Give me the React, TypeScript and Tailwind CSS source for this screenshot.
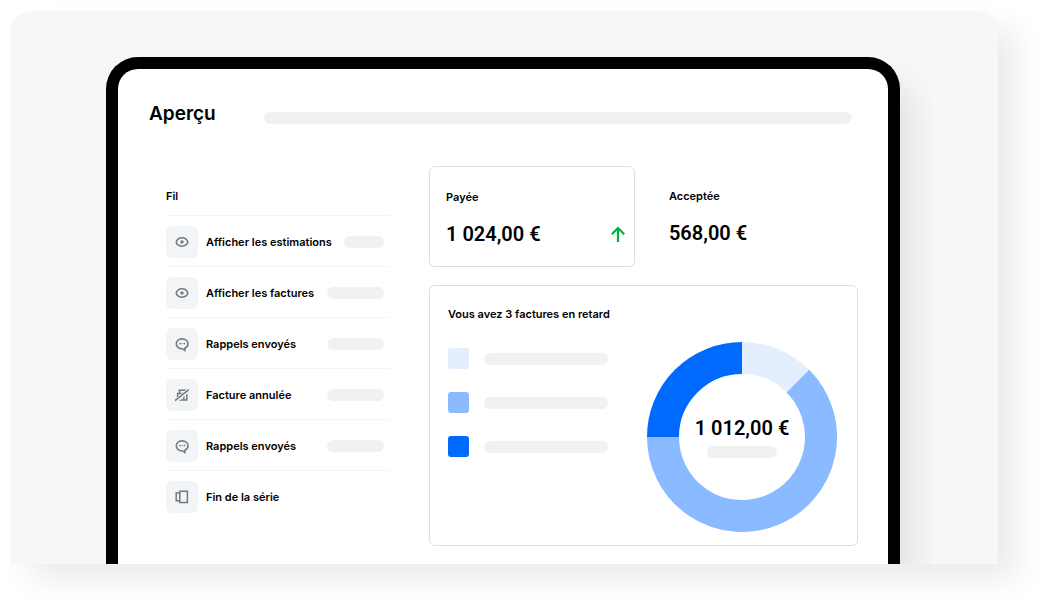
import React from 'react';

function EyeIcon() {
  return (
    <svg className="w-4 h-4" viewBox="0 0 16 16" fill="none" stroke="currentColor" strokeWidth="1.6">
      <ellipse cx="8" cy="8" rx="5.7" ry="4.2" />
      <circle cx="8" cy="8" r="1.7" fill="currentColor" stroke="none" />
    </svg>
  );
}

function ChatIcon() {
  return (
    <svg className="w-4 h-4" viewBox="0 0 16 16" fill="none" stroke="currentColor" strokeWidth="1.6">
      <path d="M10.8 12.2V14.4L8.2 12.7C4.6 12.7 2.3 10.6 2.3 7.8C2.3 4.9 4.7 2.9 8.1 2.9S14 4.9 14 7.8C14 9.8 12.7 11.4 10.8 12.2Z" />
      <g fill="currentColor" stroke="none">
        <circle cx="6" cy="7.6" r="0.9" />
        <circle cx="8.2" cy="7.6" r="0.7" />
        <circle cx="10.4" cy="7.6" r="0.9" />
      </g>
    </svg>
  );
}

function CanceledIcon() {
  return (
    <svg className="w-4 h-4" viewBox="0 0 16 16" fill="none" stroke="currentColor" strokeWidth="1.5">
      <path d="M4.4 3.2H12.4M5.6 3.2V6.2M3 6.6H9M3.6 6.6V11M5 12.9H12.8V6M9.8 8.4V12.9" />
      <path d="M1.4 14.2L15 2.8" stroke="#f2f4f6" strokeWidth="3.8" />
      <path d="M1 13.6L14.8 2.6" />
    </svg>
  );
}

function SeriesIcon() {
  return (
    <svg className="w-4 h-4" viewBox="0 0 16 16" fill="none" stroke="currentColor" strokeWidth="1.5">
      <path d="M5.8 2.2H13.4V13.6H5.8Z" />
      <path d="M5.8 4H2.2V11.8H5.8" />
    </svg>
  );
}

const feed = [
  { id: 1, label: 'Afficher les estimations', icon: EyeIcon, bar: 'w-10' },
  { id: 2, label: 'Afficher les factures', icon: EyeIcon, bar: 'w-[57px]' },
  { id: 3, label: 'Rappels envoyés', icon: ChatIcon, bar: 'w-[57px]' },
  { id: 4, label: 'Facture annulée', icon: CanceledIcon, bar: 'w-[57px]' },
  { id: 5, label: 'Rappels envoyés', icon: ChatIcon, bar: 'w-[57px]' },
  { id: 6, label: 'Fin de la série', icon: SeriesIcon, bar: '' },
];

const legend = ['bg-[#e3efff]', 'bg-[#8abaff]', 'bg-[#006aff]'];

function Donut() {
  return (
    <div className="grid place-items-center shrink-0">
      <svg className="[grid-area:1/1] w-[190px] h-[190px]" viewBox="0 0 190 190" fill="none" strokeWidth="32">
        <path d="M95 16A79 79 0 0 1 150.86 39.14" stroke="#e3efff" />
        <path d="M150.86 39.14A79 79 0 1 1 16 95" stroke="#8abaff" />
        <path d="M16 95A79 79 0 0 1 95 16" stroke="#006aff" />
      </svg>
      <div className="[grid-area:1/1] flex flex-col items-center gap-1.5">
        <span className="font-['Roboto',sans-serif] text-[20px] leading-6 font-semibold whitespace-nowrap">1 012,00 €</span>
        <div className="w-[70px] h-3 rounded-full bg-[#f1f1f1]"></div>
      </div>
    </div>
  );
}

export default function OverviewPreview() {
  return (
    <div className="pl-2.5 pr-[50px] pt-[11px] pb-[50px] bg-white text-black font-['Inter',sans-serif]">
      <div className="bg-[#f7f7f7] rounded-t-[20px] pt-[46px] pl-24 pr-[66px] shadow-[20px_16px_30px_rgba(0,0,0,0.08)]">
        {/* Clips the device shadow on the right */}
        <div className="overflow-hidden pr-8">
          <div className="border-12 border-b-0 border-black rounded-t-[32px] bg-white shadow-[16px_24px_32px_rgba(0,0,0,0.08)]">
            <header className="flex items-end pt-[35px] pl-[31px] pr-9">
              <h1 className="w-[115px] shrink-0 text-[19px] leading-5 font-semibold">Aperçu</h1>
              <div className="flex-1 h-3 rounded-full bg-[#f1f1f1]"></div>
            </header>

            <div className="flex gap-[39px] pt-[42px] pl-12 pr-[30px] pb-[18px]">
              {/* Feed */}
              <section className="w-56 shrink-0">
                <h2 className="pt-[22px] pb-[11px] text-[11px] leading-4 font-semibold">Fil</h2>
                <ul>
                  {feed.map(({ id, label, icon: Icon, bar }) => (
                    <li key={id} className="flex items-center h-[51px] border-t border-[#f5f5f5] pt-0.5 pr-1.5">
                      <div className="w-8 h-8 shrink-0 rounded-md bg-[#f2f4f6] text-[#6e7c87] flex items-center justify-center">
                        <Icon />
                      </div>
                      <span className="ml-2 text-[11px] leading-4 font-semibold whitespace-nowrap">{label}</span>
                      {bar && <div className={`ml-auto shrink-0 h-3 rounded-full bg-[#f1f1f1] ${bar}`}></div>}
                    </li>
                  ))}
                </ul>
              </section>

              {/* Totals */}
              <section className="flex-1 min-w-0">
                <div className="flex">
                  <div className="w-[48%] border border-[#dddddd] rounded-md pt-[22px] pb-[18px] pl-4 pr-2">
                    <h3 className="text-[11px] leading-4 font-semibold">Payée</h3>
                    <div className="mt-[15px] flex items-center justify-between">
                      <span className="font-['Roboto',sans-serif] text-[20px] leading-7 font-semibold whitespace-nowrap">1 024,00 €</span>
                      <svg className="w-4 h-4" viewBox="0 0 16 16" fill="none" stroke="#00b23b" strokeWidth="2.2">
                        <path d="M8 16V2M1.8 8.2L8 2L14.2 8.2" />
                      </svg>
                    </div>
                  </div>
                  <div className="pt-[22px] pl-[34px]">
                    <h3 className="text-[11px] leading-4 font-semibold">Acceptée</h3>
                    <p className="mt-[15px] font-['Roboto',sans-serif] text-[20px] leading-7 font-semibold whitespace-nowrap">568,00 €</p>
                  </div>
                </div>

                <div className="mt-[18px] border border-[#dddddd] rounded-md pt-5 pb-[13px] pl-[18px] pr-5">
                  <h3 className="text-[11px] leading-4 font-semibold">Vous avez 3 factures en retard</h3>
                  <div className="mt-5 flex justify-between">
                    <ul className="pt-1.5 flex flex-col gap-[23px]">
                      {legend.map((color) => (
                        <li key={color} className="flex items-center gap-[15px]">
                          <div className={`w-[21px] h-[21px] rounded-[3px] ${color}`}></div>
                          <div className="w-[124px] h-3 rounded-full bg-[#f1f1f1]"></div>
                        </li>
                      ))}
                    </ul>
                    <Donut />
                  </div>
                </div>
              </section>
            </div>
          </div>
        </div>
      </div>
    </div>
  );
}
